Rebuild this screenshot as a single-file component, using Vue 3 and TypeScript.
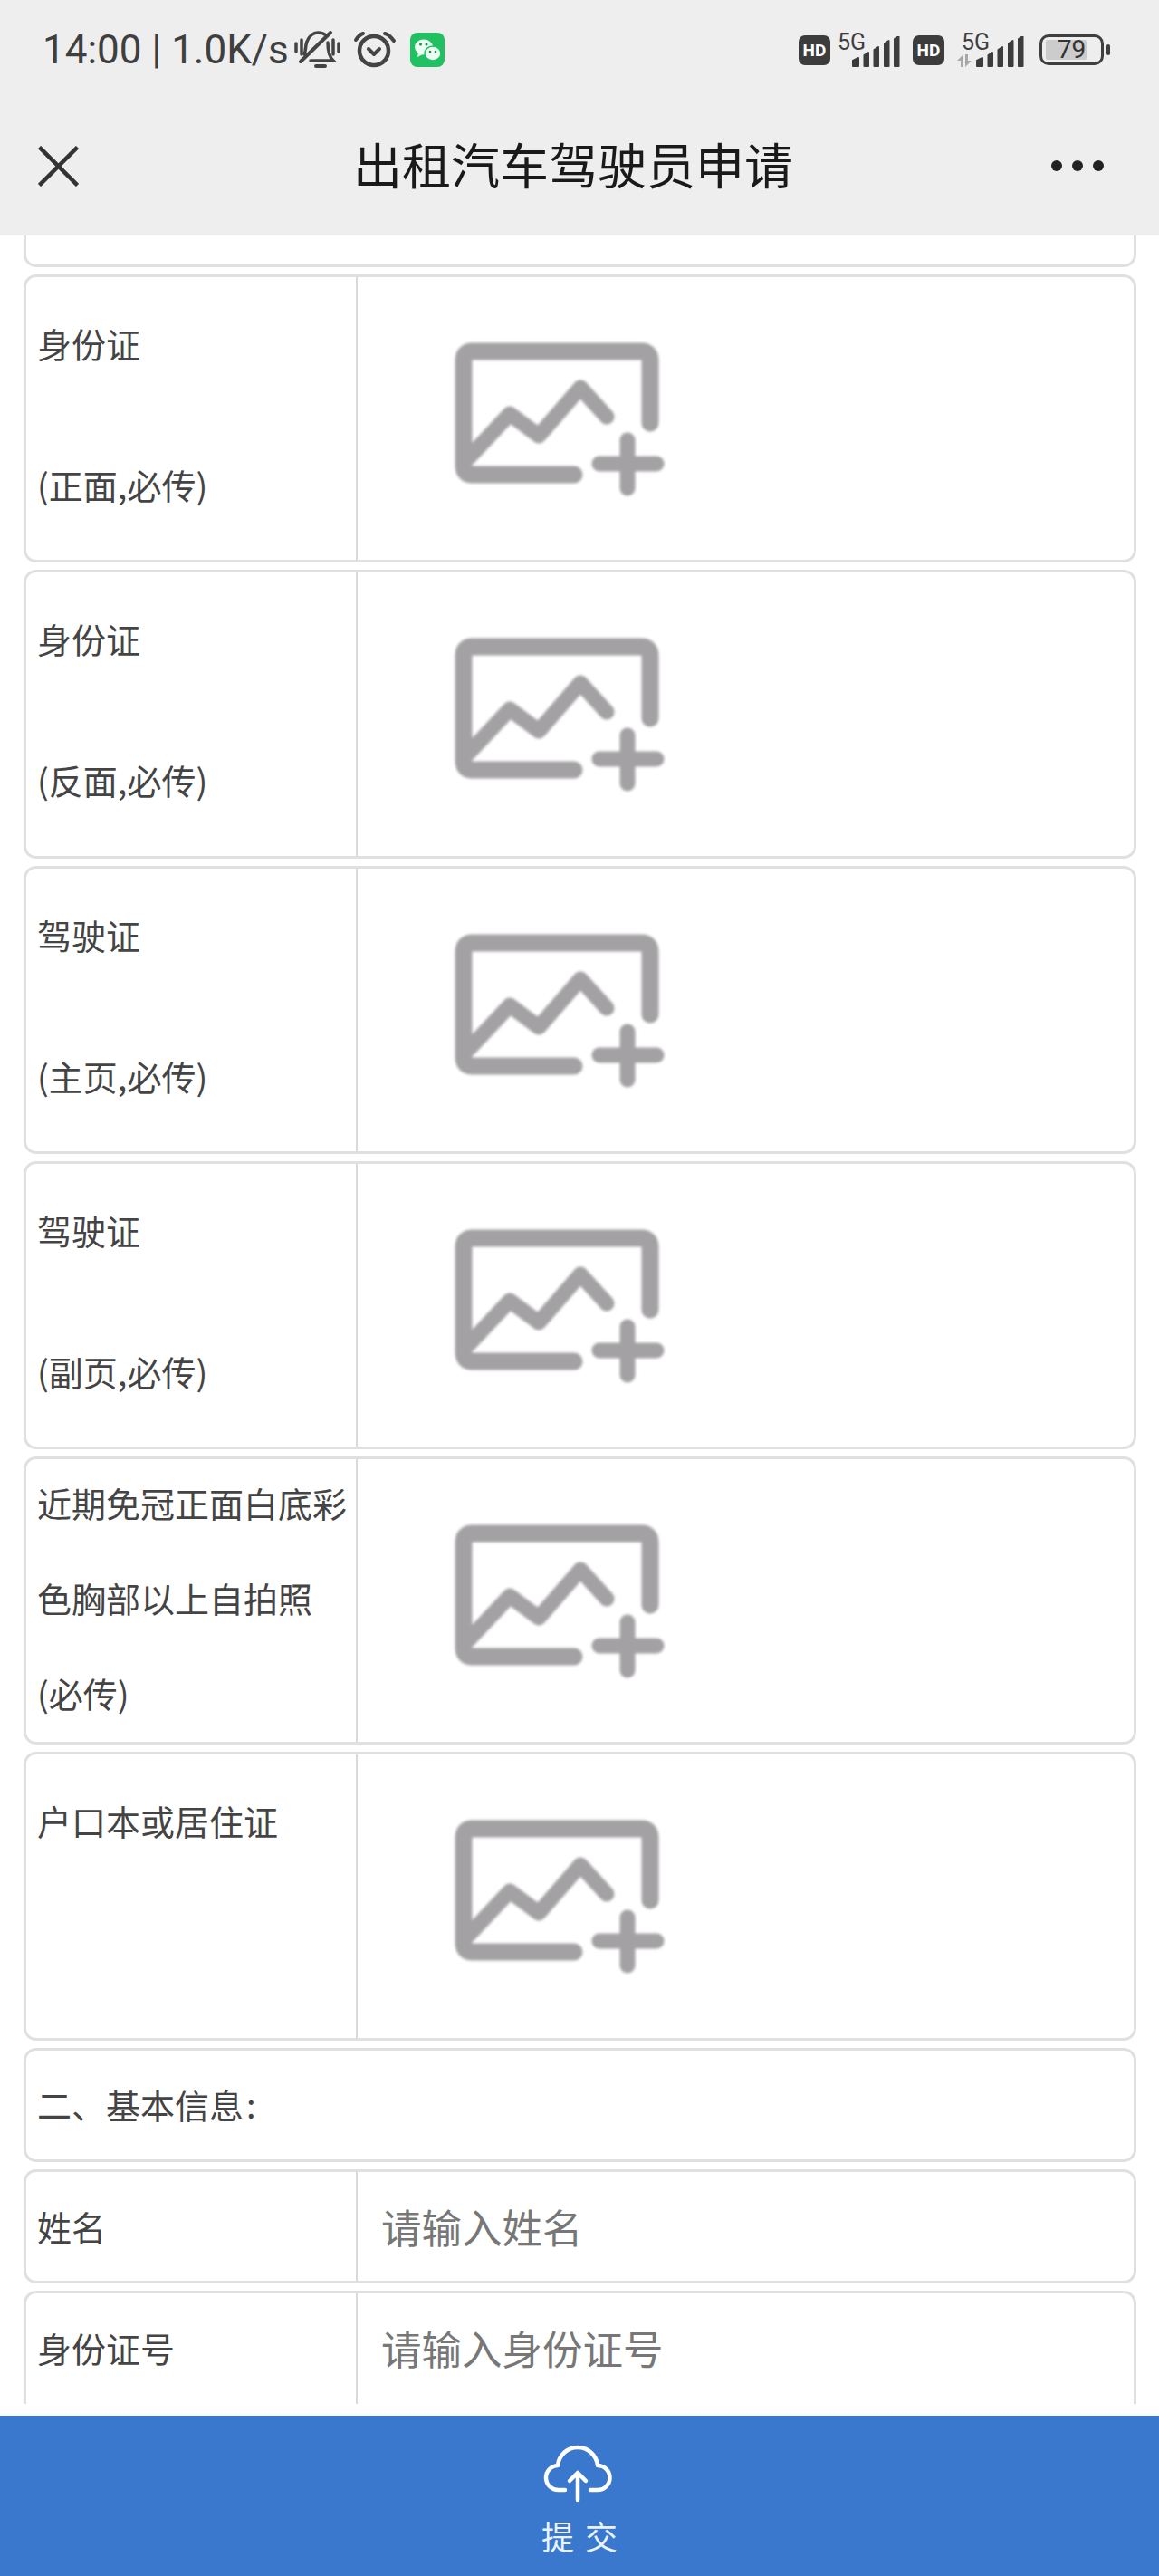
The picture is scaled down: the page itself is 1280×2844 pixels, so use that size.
<template>
  <div class="page">
    <header class="top">
      <div class="status">
        <span class="clock">14:00 | 1.0K/s</span>
        <!-- silent bell -->
        <svg class="ic-bell" width="52" height="46" viewBox="0 0 52 46" fill="none" stroke="#444" stroke-width="3.500" stroke-linecap="round">
          <path d="M2 16v9M8 12v16M43 12v16M49 16v9" stroke-width="3.500" />
          <path d="M11 28c2-4 1-9 3-14 2-6 7-10 12-10 4 0 7 1 9 3" />
          <path d="M37 15c0 8 1 15 6 20H18" />
          <path d="M7 36 40 4" stroke-width="4" />
          <path d="M24 41h10" stroke-width="4" />
        </svg>
        <!-- alarm clock -->
        <svg class="ic-alarm" width="48" height="42" viewBox="0 0 48 42" fill="none" stroke="#444" stroke-linecap="round">
          <circle cx="23" cy="22" r="16" stroke-width="4.500" />
          <path d="M3 10c2-3 5-6 8-7M35 3c4 1 7 4 10 8" stroke-width="4" />
          <path d="M17 20l6 6 6-6" stroke-width="4" stroke-linejoin="round" />
        </svg>
        <!-- chat app badge -->
        <svg class="ic-chat" width="38" height="38" viewBox="0 0 38 38">
          <rect width="38" height="38" rx="8" fill="#21c063" />
          <ellipse cx="15" cy="16" rx="10" ry="8.500" fill="#eafff2" />
          <path d="M9 21l-1 6 6-3z" fill="#eafff2" />
          <ellipse cx="25" cy="23" rx="9" ry="8" fill="#eafff2" stroke="#21c063" stroke-width="1.500" />
          <circle cx="11.500" cy="13" r="1.500" fill="#1a8f4c" />
          <circle cx="18" cy="13" r="1.500" fill="#1a8f4c" />
          <circle cx="22" cy="21" r="1.300" fill="#1a8f4c" />
          <circle cx="28" cy="21" r="1.300" fill="#1a8f4c" />
        </svg>

        <div class="status-right">
          <span class="hd">HD</span>
          <div class="net">
            <span class="five-g">5G</span>
            <svg class="bars" width="53" height="34" viewBox="0 0 53 34" fill="#3c3c3c" stroke="#3c3c3c" stroke-width="2" stroke-linejoin="round">
              <path v-for="bar in signalBars" :key="bar" :d="bar" />
            </svg>
          </div>
          <span class="hd">HD</span>
          <div class="net net-wide">
            <span class="five-g">5G</span>
            <svg class="arrows" width="16" height="14" viewBox="0 0 16 14" fill="#a8a8a8">
              <path d="M7 14V0L0 7h4v7zM9 0v14l7-7h-4V0z" />
            </svg>
            <svg class="bars" width="53" height="34" viewBox="0 0 53 34" fill="#3c3c3c" stroke="#3c3c3c" stroke-width="2" stroke-linejoin="round">
              <path v-for="bar in signalBars" :key="bar" :d="bar" />
            </svg>
          </div>
          <div class="battery">
            <div class="battery-body">
              <div class="battery-level"></div>
              <span class="battery-num">79</span>
            </div>
            <div class="battery-tip"></div>
          </div>
        </div>
      </div>

      <div class="nav">
        <svg width="45" height="45" viewBox="0 0 45 45" stroke="#333" stroke-width="4.500" fill="none">
          <path d="M1.500 1.500l42 42M43.500 1.500l-42 42" />
        </svg>
        <h1 class="title">出租汽车驾驶员申请</h1>
        <div class="dots"><i></i><i></i><i></i></div>
      </div>
    </header>

    <main class="form">
      <div class="card card-tail"></div>

      <div v-for="item in uploads" :key="item.lines.join()" class="card card-upload">
        <div class="label" :class="{ 'label-tight': item.lines.length === 3 }">
          <div v-for="line in item.lines" :key="line">{{ line }}</div>
        </div>
        <div class="value value-upload">
          <svg class="add-image" width="270" height="210" viewBox="0 0 270 210" fill="none" stroke="#a3a1a3" stroke-linecap="round" stroke-linejoin="round">
            <path d="M154 174H42q-10 0-10-10V48q0-10 10-10h186q10 0 10 10v69" stroke-width="19" />
            <path d="M38 155 83 107l32 24 46-53 29 32" stroke-width="17" />
            <path d="M182 162h63M213 136v53" stroke-width="17" />
          </svg>
        </div>
      </div>

      <div class="card card-field">
        <div class="label label-full">二、基本信息<span class="colon">:</span></div>
      </div>

      <div v-for="field in fields" :key="field.name" class="card card-field">
        <div class="label">{{ field.name }}</div>
        <div class="value">
          <input class="text-input" type="text" :placeholder="field.hint" />
        </div>
      </div>
    </main>

    <footer class="submit">
      <svg width="85" height="70" viewBox="100 35 85 70" fill="none" stroke="#fff" stroke-width="4.500" stroke-linecap="round" stroke-linejoin="round">
        <path d="M126 90h-7a13.500 13.500 0 0 1-1-27 22.100 22.100 0 0 1 44 0 13.500 13.500 0 0 1 0 27h-8" />
        <path d="M140 101V71M131 80l9-9 9 9" />
      </svg>
      <span class="submit-text">提交</span>
    </footer>
  </div>
</template>

<script setup lang="ts">
interface UploadItem {
  lines: string[]
}

interface TextField {
  name: string
  hint: string
}

// signal bars get a slanted top, rising to the right
const signalBars = [
  { x: 1, w: 6, h: 9 },
  { x: 13.5, w: 4.5, h: 15 },
  { x: 24.5, w: 4.5, h: 21 },
  { x: 36, w: 4.5, h: 28 },
  { x: 47, w: 4.5, h: 33 }
].map(({ x, w, h }) => `M${x} 33V${33 - h + 3}L${x + w} ${33 - h}V33Z`)

const uploads: UploadItem[] = [
  { lines: ['身份证', '(正面,必传)'] },
  { lines: ['身份证', '(反面,必传)'] },
  { lines: ['驾驶证', '(主页,必传)'] },
  { lines: ['驾驶证', '(副页,必传)'] },
  { lines: ['近期免冠正面白底彩', '色胸部以上自拍照', '(必传)'] },
  { lines: ['户口本或居住证'] }
]

const fields: TextField[] = [
  { name: '姓名', hint: '请输入姓名' },
  { name: '身份证号', hint: '请输入身份证号' }
]
</script>

<style>
html,
body {
  margin: 0;
  background: #fff;
}
</style>

<style scoped>
.page {
  width: 1280px;
  height: 2844px;
  display: flex;
  flex-direction: column;
  overflow: hidden;
  background: #fff;
  font-family: "Noto Sans CJK SC", "Noto Sans", sans-serif;
}

.top {
  flex: none;
  height: 260px;
  background: #eeeeee;
}

.status {
  height: 106px;
  display: flex;
  align-items: center;
  padding: 4px 54px 0 47px;
  box-sizing: border-box;
  color: #3f3f3f;
}

.clock {
  font-family: Roboto, sans-serif;
  font-size: 44px;
  line-height: 50px;
  white-space: nowrap;
}

.ic-bell {
  margin-left: 6px;
}

.ic-alarm {
  margin-left: 13px;
}

.ic-chat {
  margin-left: 15px;
}

.status-right {
  margin-left: auto;
  display: flex;
  align-items: center;
}

.hd {
  width: 35px;
  height: 33px;
  border-radius: 7px;
  background: #3c3c3c;
  color: #fff;
  font-family: Roboto, sans-serif;
  font-weight: 700;
  font-size: 19px;
  line-height: 33px;
  text-align: center;
}

.net {
  position: relative;
  width: 69px;
  height: 37px;
  margin: 0 14px 0 8px;
}

.net-wide {
  width: 74px;
  margin-left: 14px;
  margin-right: 17px;
}

.five-g {
  position: absolute;
  left: 0;
  top: -3px;
  font-family: Roboto, sans-serif;
  font-size: 25px;
  line-height: 25px;
}

.net-wide .five-g {
  left: 5px;
}

.bars {
  position: absolute;
  right: 0;
  bottom: 0;
}

.arrows {
  position: absolute;
  left: 0;
  bottom: 0;
}

.battery {
  display: flex;
  align-items: center;
}

.battery-body {
  position: relative;
  width: 71px;
  height: 34px;
  box-sizing: border-box;
  border: 3.5px solid #3f3f3f;
  border-radius: 10px;
  padding: 3px 4px;
}

.battery-level {
  width: 45px;
  height: 100%;
  background: #cccccc;
  border-radius: 2px;
}

.battery-num {
  position: absolute;
  left: 7px;
  right: 7px;
  top: -3.5px;
  text-align: center;
  font-family: Roboto, sans-serif;
  font-size: 28px;
  line-height: 34px;
  color: #333;
}

.battery-tip {
  width: 4px;
  height: 12px;
  margin-left: 3px;
  background: #3f3f3f;
  border-radius: 2px;
}

.nav {
  height: 154px;
  display: flex;
  align-items: center;
  justify-content: space-between;
  padding: 0 61px 0 42px;
}

.title {
  margin: 0 0 4px 18px;
  font-size: 54px;
  font-weight: 400;
  line-height: 70px;
  color: #1a1a1a;
}

.dots {
  display: flex;
  gap: 11px;
}

.dots i {
  width: 12px;
  height: 12px;
  border-radius: 50%;
  background: #222;
}

.form {
  flex: none;
  height: 2394px;
  overflow: hidden;
  box-sizing: border-box;
  padding: 0 25px 0 26px;
  display: flex;
  flex-direction: column;
  gap: 8px;
}

.card {
  flex: none;
  display: flex;
  box-sizing: border-box;
  border: 3px solid #e0e0e0;
  border-radius: 14px;
  background: #fff;
}

.card-tail {
  height: 35px;
  border-top: 0;
  border-top-left-radius: 0;
  border-top-right-radius: 0;
}

.card-upload {
  height: 318.3px;
}

.card-field {
  height: 126px;
}

/* the list runs on under the submit bar, so the last row is cut off */
.card-field:last-child {
  height: 170px;
}

.label {
  flex: none;
  width: 364px;
  box-sizing: border-box;
  padding-left: 12px;
  font-size: 38px;
  line-height: 120px;
  color: #444;
  white-space: nowrap;
}

.card-upload .label {
  margin-top: -5px;
  line-height: 156px;
}

.card-upload .label-tight {
  line-height: 105px;
}

.label-full {
  width: auto;
  line-height: 118px;
}

.colon {
  margin-left: 3px;
}

.value {
  flex: 1;
  min-width: 0;
  border-left: 2px solid #dadada;
  display: flex;
  align-items: flex-start;
}

.value-upload {
  padding: 44px 0 0 85px;
}

.add-image {
  filter: blur(1.6px);
}

.text-input {
  width: 100%;
  height: 120px;
  border: 0;
  outline: 0;
  padding: 0 0 0 26px;
  background: transparent;
  font-family: inherit;
  font-size: 44.5px;
  color: #444;
}

.text-input::placeholder {
  color: #777;
  opacity: 1;
}

.submit {
  flex: none;
  margin-top: 13px;
  height: 177px;
  background: #3978cc;
  display: flex;
  flex-direction: column;
  align-items: center;
  padding-top: 27px;
  box-sizing: border-box;
}

.submit-text {
  margin-top: 8px;
  font-size: 36px;
  line-height: 54px;
  letter-spacing: 12px;
  margin-right: -12px;
  color: #eaf2fb;
}
</style>
